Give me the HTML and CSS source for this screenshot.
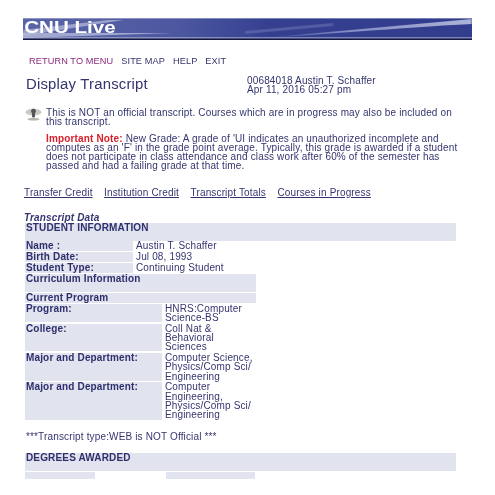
FILE: index.html
```html
<!DOCTYPE html>
<html lang="en">
<head>
<meta charset="utf-8">
<title>Display Transcript</title>
<link rel="stylesheet" href="styles.css">
</head>
<body>
<div class="page">
  <header class="banner">
    <svg class="streaks" viewBox="0 0 449 22" preserveAspectRatio="none" aria-hidden="true">
      <defs>
        <linearGradient id="st" x1="0" x2="1" y1="0" y2="0">
          <stop offset="0" stop-color="#9aa2d0" stop-opacity=".15"/>
          <stop offset=".4" stop-color="#a0a8d4" stop-opacity=".75"/>
          <stop offset="1" stop-color="#b4bbdc" stop-opacity=".95"/>
        </linearGradient>
        <filter id="soft" x="-5%" y="-30%" width="110%" height="160%"><feGaussianBlur stdDeviation="1 .5"/></filter>
      </defs>
      <path d="M222 13 L310 5 V8 L222 16Z" fill="#7f88c0" fill-opacity=".4" filter="url(#soft)"/>
      <path d="M245 19.5 L449 1 V6 C400 8 340 14 245 19.5Z" fill="url(#st)" filter="url(#soft)"/>
      <path d="M0 12 L85 2 H100 L0 18Z" fill="#b3bada" fill-opacity=".75" filter="url(#soft)"/>
      <path d="M0 15 H150 L0 20Z" fill="#b3bada" fill-opacity=".8"/>
      <rect width="449" height=".7" fill="#c5cae2" fill-opacity=".7"/>
      <rect y="19.5" width="449" height="1" fill="#c5cae2"/>
      <rect y="20.5" width="449" height="1.5" fill="#14183f"/>
    </svg>
    <span class="brand">CNU Live</span>
  </header>

  <nav class="menu">
    <a class="visited">RETURN TO MENU</a>
    <a>SITE MAP</a>
    <a>HELP</a>
    <a>EXIT</a>
  </nav>

  <div class="title-row">
    <h1>Display Transcript</h1>
    <div class="who">00684018 Austin T. Schaffer<br>Apr 11, 2016 05:27 pm</div>
  </div>

  <div class="info">
    <svg class="info-icon" viewBox="0 0 18 14" aria-hidden="true">
      <ellipse cx="9" cy="4.5" rx="8.5" ry="3.6" fill="#c9c9c4"/>
      <ellipse cx="9" cy="12" rx="6.5" ry="1.5" fill="#b5b5b0"/>
      <rect x="7.5" y="1" width="3" height="9" fill="#4c4c4c"/>
      <circle cx="9" cy="3.5" r="2.6" fill="#555"/>
    </svg>
    <div class="info-text">
      <p>This is NOT an official transcript. Courses which are in progress may also be included on this transcript.</p>
      <p><b class="alert">Important Note:</b> New Grade: A grade of 'UI indicates an unauthorized incomplete and computes as an 'F' in the grade point average. Typically, this grade is awarded if a student does not participate in class attendance and class work after 60% of the semester has passed and had a failing grade at that time.</p>
    </div>
  </div>

  <div class="links">
    <a>Transfer Credit</a>
    <a>Institution Credit</a>
    <a>Transcript Totals</a>
    <a>Courses in Progress</a>
  </div>

  <div class="caption">Transcript Data</div>
  <section class="data">
    <div class="head wide">STUDENT INFORMATION</div>
    <div class="pair short"><div class="k">Name :</div><div class="v">Austin T. Schaffer</div></div>
    <div class="pair short"><div class="k">Birth Date:</div><div class="v">Jul 08, 1993</div></div>
    <div class="pair short"><div class="k">Student Type:</div><div class="v">Continuing Student</div></div>
    <div class="head mid">Curriculum Information</div>
    <div class="head mid thin">Current Program</div>
    <div class="pair long"><div class="k">Program:</div><div class="v">HNRS:Computer Science-BS</div></div>
    <div class="pair long"><div class="k">College:</div><div class="v">Coll Nat &amp; Behavioral Sciences</div></div>
    <div class="pair long"><div class="k">Major and Department:</div><div class="v">Computer Science, Physics/Comp Sci/ Engineering</div></div>
    <div class="pair long"><div class="k">Major and Department:</div><div class="v">Computer Engineering, Physics/Comp Sci/ Engineering</div></div>
    <p class="note">***Transcript type:WEB is NOT Official ***</p>
    <div class="head wide">DEGREES AWARDED</div>
    <div class="tail"><span></span><span></span></div>
  </section>
</div>
</body>
</html>
```
FILE: styles.css
```css
html, body { margin: 0; padding: 0; background: #fff; height: 495px; overflow: hidden; }
body { font-family: "Liberation Sans", Arial, sans-serif; color: #34356f; font-size: 10px; line-height: 9px; letter-spacing: .15px; }
.page { padding: 18px 23px 0; filter: blur(.35px); height: 477px; overflow: hidden; }

.banner { position: relative; height: 22px; background: linear-gradient(90deg, #5a65a8, #4c57a0 35%, #343f90 55%, #323d8e); width: 449px; overflow: hidden; }
.streaks { position: absolute; inset: 0; width: 100%; height: 100%; }
.brand { position: relative; display: block; color: #fff; font-weight: bold; font-size: 17px; line-height: 19px; padding-left: 1px; letter-spacing: 0; transform: scaleX(1.21); transform-origin: left center; }

.menu { display: flex; gap: 8px; margin: 17px 0 0 6px; line-height: 9px; font-size: 9.2px; letter-spacing: .1px; }
.menu a { color: #34356f; }
.menu a.visited { color: #8a2a7c; }

.title-row { display: flex; margin: 10px 0 0 3px; }
h1 { margin: 1.5px 0 0; font-weight: normal; font-size: 14.9px; line-height: 13px; width: 221px; letter-spacing: .2px; color: #33346f; }
.who { line-height: 9px; }

.info { display: flex; margin: 13.5px 0 0 2px; }
.info-icon { width: 17px; height: 13px; flex: none; margin-right: 4px; }
.info-text { width: 416px; }
.info-text p { margin: 0 0 8px; }
.alert { color: #d8202c; }

.links { display: flex; gap: 11.5px; margin: 10px 0 0 1px; }
.links a { text-decoration: underline; }

.caption { font-style: italic; font-weight: bold; margin: 16px 0 0 1px; line-height: 9px; height: 10px; }

.data { margin-left: 2px; }
.head { font-weight: bold; background: #e1e3ee; padding-left: 1px; color: #2e2f6c; }
.head.wide { width: 430px; height: 18px; }
.head.mid { width: 230px; height: 18px; margin-bottom: 1px; }
.head.thin { height: 10px; }
.pair { display: flex; }
.k { background: #e1e3ee; font-weight: bold; padding-left: 1px; color: #2e2f6c; flex: none; box-sizing: border-box; }
.v { padding-left: 2px; box-sizing: border-box; }
.short { height: 11px; line-height: 10px; }
.short .k { width: 108px; margin-right: 1px; height: 10px; }
.long { margin-bottom: 1.5px; line-height: 9.3px; }
.long .k { width: 137px; margin-right: 1px; }
.long .v { width: 92px; }
.note { margin: 12px 0 12px 1px; }
.tail { display: flex; gap: 71px; margin-top: 1px; }
.tail span { height: 7px; background: #e1e3ee; }
.tail span:first-child { width: 70px; }
.tail span:last-child { width: 89px; }
```
